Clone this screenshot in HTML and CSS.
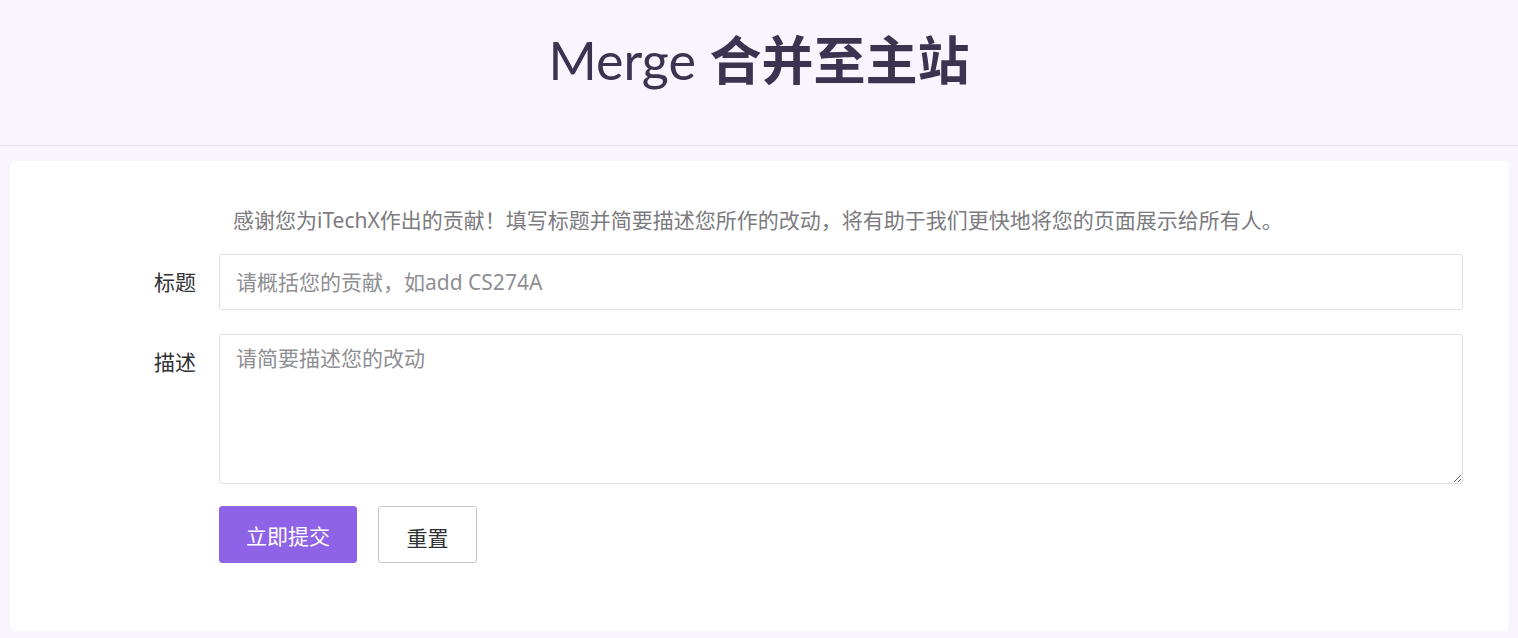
FILE: index.html
```html
<!DOCTYPE html>
<html lang="zh-CN">
<head>
<meta charset="utf-8">
<title>Merge 合并至主站</title>
<link rel="stylesheet" href="styles.css">
</head>
<body>
<header class="page-header">
  <h1 class="title"><span class="title-en">Merge</span> <span class="title-zh">合并至主站</span></h1>
</header>
<main class="card">
  <form class="form">
    <div class="spacer"></div>
    <p class="intro">感谢您为iTechX作出的贡献！填写标题并简要描述您所作的改动，将有助于我们更快地将您的页面展示给所有人。</p>
    <label class="label" for="t">标题</label>
    <input class="field input" id="t" type="text" placeholder="请概括您的贡献，如add CS274A">
    <label class="label" for="d">描述</label>
    <textarea class="field textarea" id="d" placeholder="请简要描述您的改动"></textarea>
    <div class="spacer"></div>
    <div class="actions">
      <button type="button" class="btn btn-primary">立即提交</button>
      <button type="reset" class="btn btn-default">重置</button>
    </div>
  </form>
</main>
</body>
</html>
```
FILE: styles.css
```css
* { box-sizing: border-box; }
html, body { margin: 0; padding: 0; }
body {
  background: #f8f5ff;
  font-family: "Noto Sans", "Noto Sans CJK SC", sans-serif;
  color: #303133;
}
.page-header {
  height: 146px;
  border-bottom: 1px solid #e6e3ec;
  display: flex;
  justify-content: center;
  padding-top: 22px;
}
.title {
  margin: 0;
  font-size: 52px;
  line-height: 72px;
  color: #3b3350;
  font-weight: 400;
}
.title-en { font-family: "Lato", "Noto Sans", sans-serif; font-weight: 400; }
.title-zh { font-family: "Noto Sans CJK SC", sans-serif; font-weight: 700; }
.card {
  margin: 15px 9px 0 10px;
  height: 470px;
  background: #fff;
  border-radius: 4px;
  box-shadow: 0 1px 3px rgba(60, 40, 120, 0.05);
  padding: 44px 46px 0 0;
}
.form {
  display: grid;
  grid-template-columns: 209px 1fr;
  row-gap: 24px;
}
.intro {
  margin: 0 0 -5px;
  padding-left: 14px;
  font-size: 21px;
  line-height: 30px;
  color: #7b7b80;
}
.label {
  text-align: right;
  padding-right: 23px;
  font-size: 21px;
  line-height: 56px;
  color: #303133;
}
.field {
  width: 100%;
  border: 1px solid #e0e0e6;
  border-radius: 3px;
  font-family: "Noto Sans", "Noto Sans CJK SC", sans-serif;
  font-size: 21px;
  color: #303133;
  background: #fff;
  outline: none;
}
.field::placeholder { color: #8e8e93; }
.input {
  height: 56px;
  padding: 0 16px;
}
.textarea {
  height: 150px;
  padding: 9px 16px;
  line-height: 28px;
  resize: vertical;
  margin-bottom: -2px;
}
.actions {
  display: flex;
  gap: 21px;
}
.btn {
  height: 57px;
  border-radius: 3px;
  font-family: "Noto Sans CJK SC", sans-serif;
  font-size: 21px;
  cursor: pointer;
}
.btn-primary {
  width: 138px;
  background: #8f63e7;
  border: 1px solid #8f63e7;
  color: #fff;
}
.btn-default {
  width: 99px;
  background: #fff;
  border: 1px solid #c8c8cc;
  color: #303133;
  padding-top: 6px;
}
```
